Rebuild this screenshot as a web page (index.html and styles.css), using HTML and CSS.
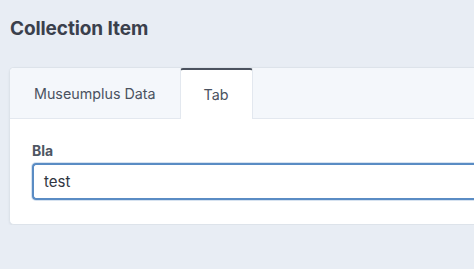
FILE: index.html
```html
<!DOCTYPE html>
<html>
<head>
<meta charset="utf-8">
<link rel="stylesheet" href="styles.css">
</head>
<body>
<div class="page">
  <h1 class="title">Collection Item</h1>
  <div class="card">
    <div class="tabs">
      <div class="tab">Museumplus Data</div>
      <div class="tab active">Tab</div>
    </div>
    <div class="body">
      <label class="label">Bla</label>
      <div class="input">test</div>
    </div>
  </div>
</div>
</body>
</html>
```

FILE: styles.css
```css
html, body {
  margin: 0;
  padding: 0;
  background: #e8edf4;
  overflow: hidden;
  font-family: Inter, "Noto Sans", sans-serif;
}
.page {
  padding: 15px 0 0 9px;
}
.title {
  margin: 0 0 0 1px;
  font-size: 19px;
  line-height: 27px;
  font-weight: 700;
  color: #3a404c;
  letter-spacing: -0.1px;
}
.card {
  margin-top: 25px;
  background: #ffffff;
  border: 1px solid #dde3ea;
  border-right: none;
  border-radius: 5px 0 0 5px;
  box-shadow: 0 1px 2px rgba(40, 60, 90, 0.08);
  overflow: hidden;
}
.tabs {
  display: flex;
  background: #f4f7fb;
  border-bottom: 1px solid #e3e8ef;
  height: 50px;
}
.tab {
  display: flex;
  align-items: center;
  justify-content: center;
  white-space: nowrap;
  padding: 0 24px;
  font-size: 14.3px;
  color: #4a5260;
}
.tab.active {
  background: #ffffff;
  border-top: 2px solid #4b525e;
  border-left: 1px solid #e3e8ef;
  border-right: 1px solid #e3e8ef;
  margin-bottom: -1px;
  padding: 0 23px;
  border-radius: 3px 3px 0 0;
}
.body {
  padding: 22px 0 24px 22px;
}
.label {
  display: block;
  font-size: 14px;
  line-height: 20px;
  font-weight: 700;
  color: #4e5663;
  margin-bottom: 2px;
}
.input {
  height: 33px;
  border: 2px solid #5a8cc4;
  border-right: none;
  border-radius: 4px 0 0 4px;
  padding: 0 10px;
  display: flex;
  align-items: center;
  font-size: 15px;
  color: #2f3541;
  box-shadow: 0 0 0 1px rgba(90, 140, 196, 0.25);
}
```
